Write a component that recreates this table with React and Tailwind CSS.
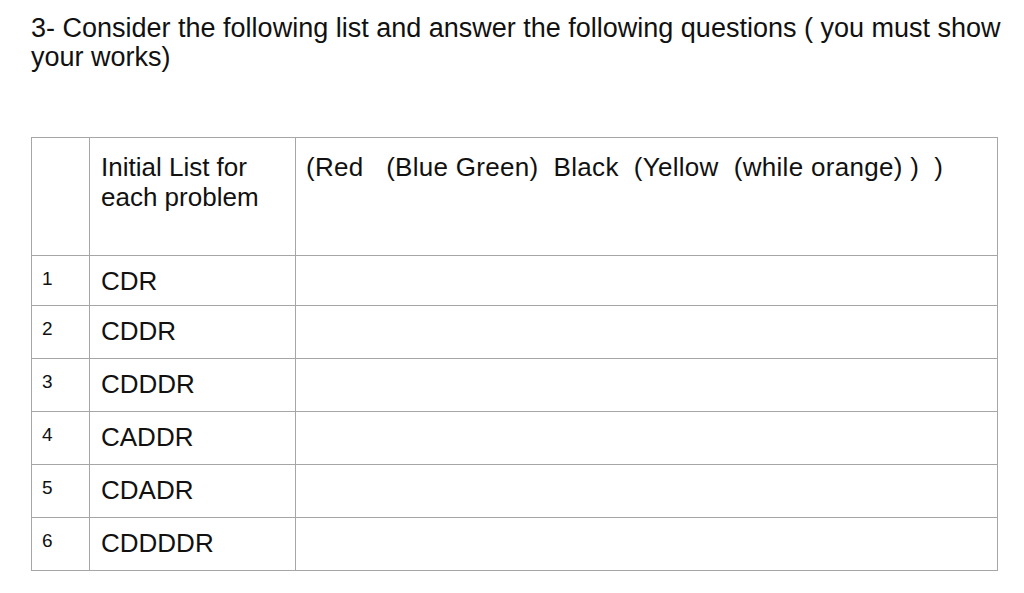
import React from "react";

const rows = [
  { n: "1", op: "CDR", h: "h-[50px]" },
  { n: "2", op: "CDDR", h: "h-[53px]" },
  { n: "3", op: "CDDDR", h: "h-[53px]" },
  { n: "4", op: "CADDR", h: "h-[53px]" },
  { n: "5", op: "CDADR", h: "h-[53px]" },
  { n: "6", op: "CDDDDR", h: "h-[53px]" },
];

const App = () => {
  return (
    <div
      className="w-[1024px] h-[593px] bg-white text-[#111] overflow-hidden"
      style={{ fontFamily: '"Liberation Sans", Arial, sans-serif' }}
    >
      <div className="pl-[31px] pt-[14px] text-[27px] leading-[29px] whitespace-nowrap">
        3- Consider the following list and answer the following questions ( you must show
        <br />
        your works)
      </div>

      <table className="ml-[31px] mt-[65px] w-[967px] border-collapse table-fixed">
        <colgroup>
          <col className="w-[58px]" />
          <col className="w-[206px]" />
          <col />
        </colgroup>
        <tbody>
          <tr className="h-[118px]">
            <td className="border border-[#a6a6a6] align-top"></td>
            <td className="border border-[#a6a6a6] align-top pl-[11px] pt-[14px] text-[26px] leading-[30px] whitespace-nowrap">
              Initial List for
              <br />
              each problem
            </td>
            <td className="border border-[#a6a6a6] align-top pl-[10px] pt-[14px] text-[26px] leading-[30px] tracking-[0.3px] whitespace-pre">
              {"(Red   (Blue Green)  Black  (Yellow  (while orange) )  )"}
            </td>
          </tr>
          {rows.map((r) => (
            <tr key={r.n} className={r.h}>
              <td className="border border-[#a6a6a6] align-top pl-[10px] pt-[13px] text-[19px] leading-[20px]">
                {r.n}
              </td>
              <td className="border border-[#a6a6a6] align-top pl-[11px] pt-[10px] text-[26px] leading-[30px]">
                {r.op}
              </td>
              <td className="border border-[#a6a6a6]"></td>
            </tr>
          ))}
        </tbody>
      </table>
    </div>
  );
};

export default App;
